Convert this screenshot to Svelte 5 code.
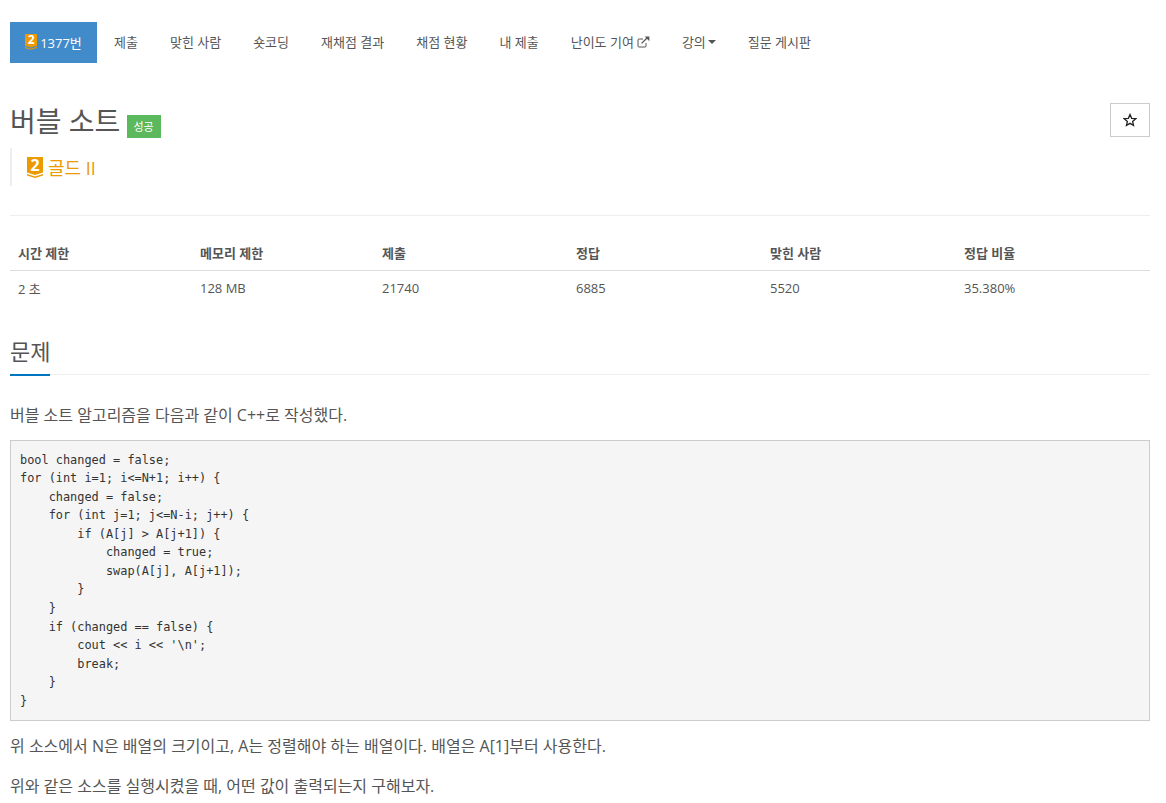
<script>
    const tabs = [
        { label: "제출" },
        { label: "맞힌 사람" },
        { label: "숏코딩" },
        { label: "재채점 결과" },
        { label: "채점 현황" },
        { label: "내 제출" },
        { label: "난이도 기여", external: true },
        { label: "강의", caret: true },
        { label: "질문 게시판" }
    ]

    const columns = [
        { head: "시간 제한", value: "2 초", width: 182 },
        { head: "메모리 제한", value: "128 MB", width: 182 },
        { head: "제출", value: "21740", width: 194 },
        { head: "정답", value: "6885", width: 194 },
        { head: "맞힌 사람", value: "5520", width: 194 },
        { head: "정답 비율", value: "35.380%", width: 194 }
    ]

    const code = `bool changed = false;
for (int i=1; i<=N+1; i++) {
    changed = false;
    for (int j=1; j<=N-i; j++) {
        if (A[j] > A[j+1]) {
            changed = true;
            swap(A[j], A[j+1]);
        }
    }
    if (changed == false) {
        cout << i << '\\n';
        break;
    }
}`
</script>

{#snippet tier(size)}
    <span class="tier" style="width: {size}px; height: {size * 1.3125}px">
        <svg width={size} height={size * 1.3125} viewBox="0 0 16 21">
            <path d="M0 0H16V15.5L8 18L0 15.5Z" fill="#ec9a00" />
            <path d="M0 17L8 19.5L16 17V18.5L8 21L0 18.5Z" fill="#ec9a00" />
        </svg>
        <span class="tier-num" style="font-size: {size}px">2</span>
    </span>
{/snippet}

<div class="page">
    <nav class="tabs">
        <a class="tab active">{@render tier(12)}<span>1377번</span></a>
        {#each tabs as tab}
            <a class="tab">
                {tab.label}
                {#if tab.external}
                    <svg class="ext" width="13" height="12" viewBox="0 0 13 12">
                        <path d="M9 7V10Q9 11 8 11H2Q1 11 1 10V4Q1 3 2 3H6" fill="none" stroke="#555" stroke-width="1" />
                        <path d="M4.6 7.4L10 2" fill="none" stroke="#555" stroke-width="1.3" />
                        <path d="M7.8 .6H12.4V5.2Z" fill="#555" />
                    </svg>
                {/if}
                {#if tab.caret}<i class="caret"></i>{/if}
            </a>
        {/each}
    </nav>

    <div class="title-row">
        <h1>버블 소트 <span class="badge">성공</span></h1>
        <button class="star" aria-label="star">
            <svg width="14" height="14" viewBox="0 0 24 24">
                <path d="M12 2.6L14.8 9.1L21.9 9.7L16.5 14.4L18.1 21.3L12 17.7L5.9 21.3L7.5 14.4L2.1 9.7L9.2 9.1Z" fill="none" stroke="#222" stroke-width="2.2" />
            </svg>
        </button>
    </div>

    <blockquote class="level">{@render tier(16)}<span>골드 II</span></blockquote>

    <hr />

    <table>
        <thead>
            <tr>
                {#each columns as col}
                    <th style="width: {col.width}px">{col.head}</th>
                {/each}
            </tr>
        </thead>
        <tbody>
            <tr>
                {#each columns as col}
                    <td>{col.value}</td>
                {/each}
            </tr>
        </tbody>
    </table>

    <section>
        <div class="headline"><h2>문제</h2></div>
        <p>버블 소트 알고리즘을 다음과 같이 C++로 작성했다.</p>
        <pre>{code}</pre>
        <p>위 소스에서 N은 배열의 크기이고, A는 정렬해야 하는 배열이다. 배열은 A[1]부터 사용한다.</p>
        <p>위와 같은 소스를 실행시켰을 때, 어떤 값이 출력되는지 구해보자.</p>
    </section>
</div>

<style>
    :global(body) {
        background: #fff;
        overflow: hidden;
    }

    .page {
        padding: 22px 16px 0 10px;
        font-family: "Open Sans", "Noto Sans CJK KR", sans-serif;
        font-size: 13px;
        color: #555;
    }

    .tabs {
        display: flex;
        height: 41px;
    }

    .tab {
        display: flex;
        align-items: center;
        gap: 1px;
        padding: 0 16px 2px;
        color: #555;
        white-space: nowrap;
    }

    .tab.active {
        background: #428bca;
        color: #fff;
        width: 87px;
        margin-right: 1px;
        box-sizing: border-box;
        justify-content: center;
        padding: 0 0 1px;
        gap: 3px;
    }

    .tier {
        position: relative;
        flex: none;
        display: block;
    }

    .tier svg {
        display: block;
    }

    .tier-num {
        position: absolute;
        top: 0;
        left: 0;
        width: 100%;
        text-align: center;
        line-height: 1.0;
        font-family: "Open Sans", sans-serif;
        font-weight: 700;
        color: #fff;
    }

    .ext {
        margin-left: 2px;
    }

    .caret {
        width: 0;
        height: 0;
        margin-left: 1px;
        border-top: 4px solid #555;
        border-left: 4px solid transparent;
        border-right: 4px solid transparent;
    }

    .title-row {
        display: flex;
        justify-content: space-between;
        align-items: flex-start;
        margin-top: 40px;
        height: 39px;
    }

    h1 {
        margin: 0;
        font-size: 28px;
        font-weight: 400;
        line-height: 36px;
        color: #555;
    }

    .badge {
        display: inline-block;
        vertical-align: 1px;
        margin-left: -1px;
        width: 34px;
        height: 23px;
        line-height: 23px;
        text-align: center;
        background: #5cb85c;
        color: #fff;
        font-size: 11px;
    }

    .star {
        width: 40px;
        height: 34px;
        padding: 0 1px 0 0;
        background: #fff;
        border: 1px solid #ccc;
        display: flex;
        align-items: center;
        justify-content: center;
    }

    .level {
        display: flex;
        align-items: center;
        gap: 5px;
        margin: 6px 0 0;
        height: 38px;
        padding-left: 15px;
        border-left: 2px solid #eee;
        color: #ec9a00;
        font-size: 18px;
    }

    hr {
        margin: 29px 0 0;
        border: 0;
        border-top: 1px solid #eee;
    }

    table {
        width: 100%;
        margin-top: 20px;
        border-collapse: collapse;
        table-layout: fixed;
    }

    th {
        box-sizing: border-box;
        height: 34px;
        padding: 0 8px 1px;
        text-align: left;
        font-size: 13px;
        font-weight: 700;
        border-bottom: 1px solid #ddd;
    }

    td {
        height: 35px;
        padding: 0 8px;
        font-size: 13px;
    }

    section {
        margin-top: 29px;
    }

    .headline {
        border-bottom: 1px solid #eee;
        height: 39px;
    }

    h2 {
        display: inline-block;
        margin: 0;
        height: 39px;
        font-size: 22px;
        font-weight: 400;
        line-height: 32px;
        border-bottom: 2px solid #0076c0;
        color: #555;
    }

    p {
        margin: 0;
        font-size: 16px;
        line-height: 20px;
    }

    .headline + p {
        margin-top: 30px;
    }

    pre {
        margin: 15px 0 15px;
        padding: 10px 9.5px 9px 9px;
        height: 260px;
        background: #f5f5f5;
        border: 1px solid #ccc;
        font-family: "DejaVu Sans Mono", monospace;
        font-size: 11.9px;
        line-height: 18.57px;
        color: #333;
    }

    pre + p {
        margin-bottom: 20px;
    }
</style>
